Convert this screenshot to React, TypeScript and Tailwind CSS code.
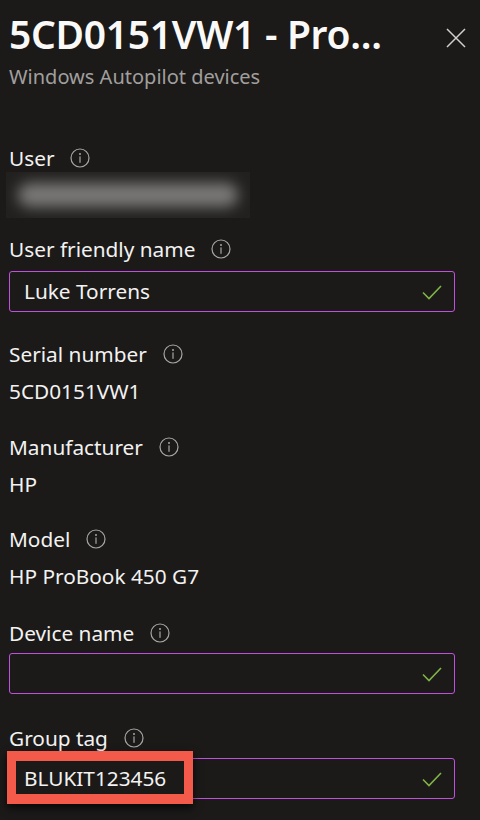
import { ReactNode } from "react";

const font = { fontFamily: '"Noto Sans", "Open Sans", sans-serif' };

function InfoIcon() {
  return (
    <svg width="20" height="20" viewBox="0 0 20 20" className="shrink-0">
      <circle cx="10" cy="10" r="9" fill="none" stroke="#a8a6a4" strokeWidth="1.2" />
      <circle cx="10" cy="6" r="1" fill="#a8a6a4" />
      <rect x="9.4" y="8.4" width="1.2" height="6.4" fill="#a8a6a4" />
    </svg>
  );
}

function Check() {
  return (
    <svg width="20" height="16" viewBox="0 0 20 16" className="shrink-0">
      <path d="M1 8.5 L7 14.5 L19 2" fill="none" stroke="#7fb446" strokeWidth="1.6" />
    </svg>
  );
}

function Label({ text, className = "" }: { text: string; className?: string }) {
  return (
    <div className={"flex items-center gap-[16px] h-[28px] text-[20.8px] leading-[28px] text-[#f3f2f1] " + className}>
      <span>{text}</span>
      <InfoIcon />
    </div>
  );
}

function Value({ children }: { children: ReactNode }) {
  return <div className="mt-[9px] h-[28px] text-[20.8px] leading-[28px] text-[#f3f2f1]">{children}</div>;
}

function Field({ value, className = "" }: { value?: string; className?: string }) {
  return (
    <div className={"h-[41px] w-[446px] flex items-center justify-between pl-[14px] pr-[12px] border border-[#c150de] rounded-[3px] " + className}>
      <span className="text-[20.8px] text-[#f3f2f1]">{value}</span>
      <Check />
    </div>
  );
}

export default function App() {
  return (
    <div style={font} className="w-[480px] h-[820px] bg-[#1b1a19] overflow-hidden px-[9px]">
      <div className="flex items-start justify-between pt-[10px]">
        <h1 className="text-[39px] leading-[48px] font-semibold text-[#faf9f8] tracking-[-0.3px]">5CD0151VW1 - Pro...</h1>
        <svg width="20" height="20" viewBox="0 0 20 20" className="mt-[18px] mr-[5px]">
          <path d="M1 1 L19 19 M19 1 L1 19" stroke="#d2d0ce" strokeWidth="1.5" />
        </svg>
      </div>
      <p className="mt-[7px] text-[20px] leading-[24px] text-[#a19f9d]">Windows Autopilot devices</p>

      <Label text="User" className="mt-[55px]" />
      <div className="h-[46px] w-[244px] -ml-[3px] bg-[#222120] overflow-hidden flex items-center">
        <div className="ml-[12px] h-[24px] w-[220px] rounded-full bg-[#7a7978] blur-[7px]" />
      </div>

      <Label text="User friendly name" className="mt-[17px]" />
      <Field value="Luke Torrens" className="mt-[8px]" />

      <Label text="Serial number" className="mt-[28px]" />
      <Value>5CD0151VW1</Value>

      <Label text="Manufacturer" className="mt-[28px]" />
      <Value>HP</Value>

      <Label text="Model" className="mt-[27px]" />
      <Value>HP ProBook 450 G7</Value>

      <Label text="Device name" className="mt-[29px]" />
      <Field className="mt-[6px] h-[40px]" />

      <Label text="Group tag" className="mt-[30px]" />
      <div className="relative mt-[6px]">
        <Field value="BLUKIT123456" />
        <div className="absolute left-[-2px] top-[-7px] w-[186px] h-[53px] border-x-[9px] border-y-[10px] border-[#f45a4a] shadow-[0_4px_8px_rgba(0,0,0,0.7)]" />
      </div>
    </div>
  );
}
